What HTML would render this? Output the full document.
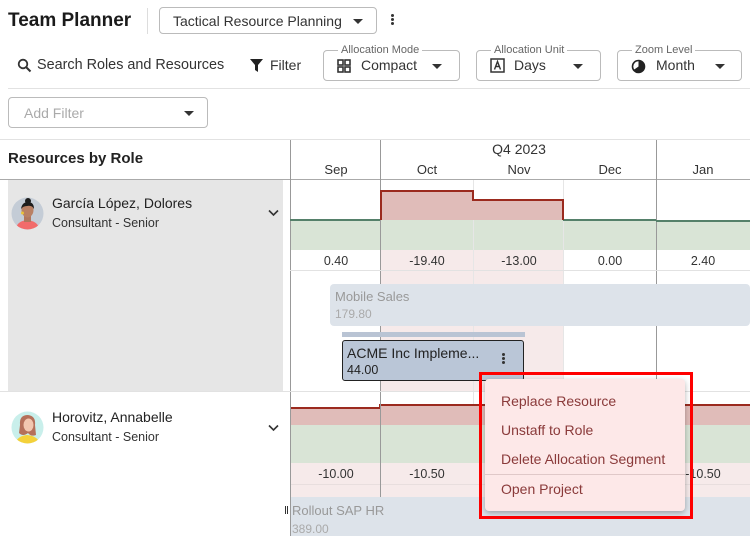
<!DOCTYPE html>
<html><head><meta charset="utf-8"><style>
*{box-sizing:border-box;margin:0;padding:0}
body{width:750px;height:536px;overflow:hidden;background:#fff;font-family:"Liberation Sans",Arial,sans-serif;color:#222;position:relative}
.a{position:absolute}
.box{position:absolute;border:1px solid #bbb;border-radius:4px;background:#fff}
.lbl{position:absolute;top:-8px;font-size:11px;color:#666;background:#fff;padding:0 3px;line-height:14px}
.tri{position:absolute;width:0;height:0;border-left:5px solid transparent;border-right:5px solid transparent;border-top:5px solid #333}
.t14{font-size:14px}
.c{text-align:center}
.mi{position:absolute;left:16px;font-size:14px;color:#8a3a3a}
</style></head><body>
<!-- header -->
<div class="a" style="left:8px;top:10px;font-size:19px;font-weight:bold;color:#1a1a1a">Team Planner</div>
<div class="a" style="left:147px;top:8px;width:1px;height:26px;background:#ddd"></div>
<div class="box" style="left:159px;top:7px;width:218px;height:27px"><span class="a t14" style="left:13px;top:5px;color:#333">Tactical Resource Planning</span><div class="tri" style="left:193px;top:11px"></div></div>
<div class="a" style="left:391px;top:14px;width:3px;height:3px;background:#333;border-radius:2px;box-shadow:0 4px 0 #333,0 8px 0 #333"></div>
<svg class="a" style="left:17px;top:58px" width="15" height="15" viewBox="0 0 15 15"><circle cx="6" cy="6" r="4.3" fill="none" stroke="#333" stroke-width="1.8"/><path d="M9 9 L13.5 13.5" stroke="#333" stroke-width="2"/></svg>
<div class="a" style="left:37px;top:57px;color:#333;font-size:14.4px">Search Roles and Resources</div>
<svg class="a" style="left:250px;top:59px" width="13" height="13" viewBox="0 0 13 13"><path d="M0 0H13L8 6V13L5 11V6Z" fill="#222"/></svg>
<div class="a t14" style="left:270px;top:57px;color:#333">Filter</div>
<div class="box" style="left:323px;top:50px;width:137px;height:31px"><span class="lbl" style="left:14px">Allocation Mode</span>
<svg class="a" style="left:13px;top:8px" width="14" height="14" viewBox="0 0 14 14"><g fill="none" stroke="#333" stroke-width="1.6"><rect x="1" y="1" width="5" height="5"/><rect x="8" y="1" width="5" height="5"/><rect x="1" y="8" width="5" height="5"/><rect x="8" y="8" width="5" height="5"/></g></svg>
<span class="a t14" style="left:37px;top:6px;color:#333">Compact</span><div class="tri" style="left:108px;top:13px"></div></div>
<div class="box" style="left:476px;top:50px;width:125px;height:31px"><span class="lbl" style="left:14px">Allocation Unit</span>
<svg class="a" style="left:13px;top:7px" width="15" height="15" viewBox="0 0 15 15"><rect x="1" y="1" width="13" height="13" fill="none" stroke="#333" stroke-width="1.5"/><path d="M4.5 11.5L7.5 3.5L10.5 11.5M5.7 8.5H9.3" fill="none" stroke="#333" stroke-width="1.4"/></svg>
<span class="a t14" style="left:37px;top:6px;color:#333">Days</span><div class="tri" style="left:96px;top:13px"></div></div>
<div class="box" style="left:617px;top:50px;width:125px;height:31px"><span class="lbl" style="left:14px">Zoom Level</span>
<svg class="a" style="left:13px;top:8px" width="15" height="15" viewBox="0 0 15 15"><circle cx="7.5" cy="7.5" r="6" fill="none" stroke="#222" stroke-width="1.6"/><path d="M7.5 7.5V1.5A6 6 0 1 1 2.5 11Z" fill="#222"/></svg>
<span class="a t14" style="left:38px;top:6px;color:#333">Month</span><div class="tri" style="left:97px;top:13px"></div></div>
<div class="a" style="left:8px;top:88px;width:742px;height:1px;background:#e2e2e2"></div>
<div class="box" style="left:8px;top:97px;width:200px;height:31px"><span class="a t14" style="left:15px;top:7px;color:#aaa">Add Filter</span><div class="tri" style="left:175px;top:13px"></div></div>
<div class="a" style="left:0;top:139px;width:750px;height:1px;background:#e2e2e2"></div>
<!-- table header -->
<div class="a" style="left:8px;top:150px;font-size:15px;font-weight:bold;color:#222">Resources by Role</div>
<div class="a c t14" style="left:470px;top:141px;width:98px;color:#333">Q4 2023</div>
<div class="a c" style="left:296px;top:162px;width:80px;font-size:13px;color:#333">Sep</div>
<div class="a c" style="left:387px;top:162px;width:80px;font-size:13px;color:#333">Oct</div>
<div class="a c" style="left:479px;top:162px;width:80px;font-size:13px;color:#333">Nov</div>
<div class="a c" style="left:570px;top:162px;width:80px;font-size:13px;color:#333">Dec</div>
<div class="a c" style="left:663px;top:162px;width:80px;font-size:13px;color:#333">Jan</div>
<div class="a" style="left:0;top:179px;width:750px;height:1px;background:#aaa"></div>
<!-- left row1 -->
<div class="a" style="left:8px;top:180px;width:275px;height:211px;background:#e6e6e6"></div>
<svg class="a" style="left:11px;top:197px" width="33" height="33" viewBox="0 0 33 33"><clipPath id="c1"><circle cx="16.5" cy="16.5" r="16"/></clipPath><g clip-path="url(#c1)"><rect width="33" height="33" fill="#c4ccd6"/><path d="M4 33Q6 24 16 23Q27 24 29 33Z" fill="#f26b6b"/><rect x="13" y="17" width="7" height="8" fill="#b0775e"/><ellipse cx="16.5" cy="13" rx="6" ry="7.5" fill="#b98064"/><path d="M10 12Q11 5 17 5Q23 5 23 12Q21 8 16 9Q12 9 10 12Z" fill="#1d1d1d"/><circle cx="17" cy="4" r="3" fill="#1d1d1d"/><circle cx="11.5" cy="16" r="1.5" fill="#e8c23a"/></g></svg>
<div class="a t14" style="left:52px;top:195px;color:#222">García López, Dolores</div>
<div class="a" style="left:52px;top:216px;font-size:12.5px;color:#333">Consultant - Senior</div>
<svg class="a" style="left:268px;top:209px" width="11" height="8" viewBox="0 0 11 8"><path d="M1 1.5L5.5 6L10 1.5" fill="none" stroke="#333" stroke-width="1.6"/></svg>
<!-- chart bg row1 -->
<div class="a" style="left:380px;top:250px;width:183px;height:141px;background:#f6eaea"></div>
<div class="a" style="left:290px;top:220px;width:460px;height:30px;background:#d9e4d6"></div>
<!-- grid lines -->
<div class="a" style="left:290px;top:140px;width:1px;height:396px;background:#999"></div>
<div class="a" style="left:380px;top:140px;width:1px;height:396px;background:#999"></div>
<div class="a" style="left:656px;top:140px;width:1px;height:396px;background:#999"></div>
<div class="a" style="left:473px;top:180px;width:1px;height:356px;background:#e6e6e6"></div>
<div class="a" style="left:563px;top:180px;width:1px;height:356px;background:#e6e6e6"></div>
<!-- lines row1 -->
<div class="a" style="left:290px;top:219px;width:90px;height:2px;background:#55806a"></div>
<div class="a" style="left:563px;top:219px;width:93px;height:2px;background:#55806a"></div>
<div class="a" style="left:656px;top:220px;width:94px;height:2px;background:#55806a"></div>
<div class="a" style="left:380px;top:190px;width:93px;height:30px;background:#e0bcb9;border:2px solid #9b2a1e;border-bottom:none;border-right:none"></div>
<div class="a" style="left:473px;top:199px;width:91px;height:21px;background:#e0bcb9;border-top:2px solid #9b2a1e;border-right:2px solid #9b2a1e"></div>
<div class="a" style="left:472px;top:190px;width:2px;height:11px;background:#9b2a1e"></div>
<div class="a" style="left:290px;top:270px;width:460px;height:1px;background:#e2e2e2"></div>
<div class="a c" style="left:296px;top:254px;width:80px;font-size:12.5px;color:#333">0.40</div>
<div class="a c" style="left:387px;top:254px;width:80px;font-size:12.5px;color:#333">-19.40</div>
<div class="a c" style="left:479px;top:254px;width:80px;font-size:12.5px;color:#333">-13.00</div>
<div class="a c" style="left:570px;top:254px;width:80px;font-size:12.5px;color:#333">0.00</div>
<div class="a c" style="left:663px;top:254px;width:80px;font-size:12.5px;color:#333">2.40</div>
<!-- bars row1 -->
<div class="a" style="left:330px;top:284px;width:420px;height:42px;background:#dde3ea;border-radius:4px"></div>
<div class="a" style="left:335px;top:289px;font-size:13px;color:#999">Mobile Sales</div>
<div class="a" style="left:335px;top:307px;font-size:12px;color:#aaa">179.80</div>
<div class="a" style="left:342px;top:332px;width:183px;height:5px;background:#b9c4d4"></div>
<div class="a" style="left:342px;top:340px;width:182px;height:41px;background:#bac6d7;border:1px solid #222;border-radius:3px"></div>
<div class="a" style="left:347px;top:345px;font-size:14px;color:#222">ACME Inc Impleme...</div>
<div class="a" style="left:347px;top:363px;font-size:12.5px;color:#222">44.00</div>
<div class="a" style="left:502px;top:353px;width:3px;height:3px;background:#333;border-radius:2px;box-shadow:0 4px 0 #333,0 8px 0 #333"></div>
<div class="a" style="left:0;top:391px;width:750px;height:1px;background:#e2e2e2"></div>
<!-- row2 left -->
<svg class="a" style="left:11px;top:411px" width="33" height="33" viewBox="0 0 33 33"><clipPath id="c2"><circle cx="16.5" cy="16.5" r="16"/></clipPath><g clip-path="url(#c2)"><rect width="33" height="33" fill="#c9efeb"/><path d="M4 33Q6 25 16 24Q27 25 29 33Z" fill="#f4d13a"/><path d="M9 14Q8 4 17 4Q25 5 24 14L25 24Q20 26 17 22Q12 26 8 22Z" fill="#b5705a"/><ellipse cx="17.5" cy="14" rx="5" ry="6.5" fill="#f2c7b0"/></g></svg>
<div class="a t14" style="left:52px;top:409px;color:#222">Horovitz, Annabelle</div>
<div class="a" style="left:52px;top:430px;font-size:12.5px;color:#333">Consultant - Senior</div>
<svg class="a" style="left:268px;top:424px" width="11" height="8" viewBox="0 0 11 8"><path d="M1 1.5L5.5 6L10 1.5" fill="none" stroke="#333" stroke-width="1.6"/></svg>
<!-- row2 chart -->
<div class="a" style="left:291px;top:407px;width:89px;height:18px;background:#e0bcb9;border-top:2px solid #9b2a1e"></div>
<div class="a" style="left:381px;top:404px;width:369px;height:21px;background:#e0bcb9;border-top:2px solid #9b2a1e"></div>
<div class="a" style="left:379px;top:404px;width:2px;height:5px;background:#9b2a1e"></div>
<div class="a" style="left:291px;top:425px;width:459px;height:38px;background:#d9e4d6"></div>
<div class="a" style="left:291px;top:463px;width:459px;height:34px;background:#f6eaea"></div>
<div class="a" style="left:291px;top:484px;width:459px;height:1px;background:#e8dede"></div>
<div class="a" style="left:380px;top:404px;width:1px;height:93px;background:#999"></div>
<div class="a" style="left:656px;top:404px;width:1px;height:93px;background:#999"></div>
<div class="a c" style="left:296px;top:467px;width:80px;font-size:12.5px;color:#333">-10.00</div>
<div class="a c" style="left:387px;top:467px;width:80px;font-size:12.5px;color:#333">-10.50</div>
<div class="a c" style="left:663px;top:467px;width:80px;font-size:12.5px;color:#333">-10.50</div>
<div class="a" style="left:291px;top:497px;width:459px;height:39px;background:#dde3ea"></div>
<div class="a" style="left:292px;top:503px;font-size:13px;color:#999">Rollout SAP HR</div>
<div class="a" style="left:292px;top:522px;font-size:12px;color:#aaa">389.00</div>
<div class="a" style="left:285px;top:506px;width:1px;height:8px;background:#333;box-shadow:2px 0 0 #333"></div>
<!-- popup -->
<div class="a" style="left:479px;top:372px;width:214px;height:147px;border:3px solid #f00"></div>
<div class="a" style="left:485px;top:379px;width:200px;height:132px;background:#fde8e8;border-radius:4px;box-shadow:0 2px 6px rgba(0,0,0,.3)">
<div class="mi" style="top:14px">Replace Resource</div>
<div class="mi" style="top:43px">Unstaff to Role</div>
<div class="mi" style="top:72px">Delete Allocation Segment</div>
<div class="a" style="left:0;top:95px;width:200px;height:1px;background:#e0c8c8"></div>
<div class="mi" style="top:102px">Open Project</div>
</div>
</body></html>
